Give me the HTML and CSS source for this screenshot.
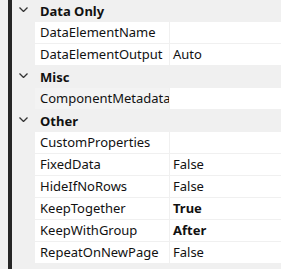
FILE: index.html
```html
<!DOCTYPE html>
<html lang="en">
<head>
    <meta charset="UTF-8">
    <title>Properties</title>
    <link rel="stylesheet" href="styles.css">
</head>
<body>

<div class="grid">
    <div class="category">
        <span class="chevron"><svg width="9" height="5" viewBox="0 0 9 5"><path d="M0.5 0.5 L4.5 4.5 L8.5 0.5" fill="none" stroke="#333" stroke-width="1.3"/></svg></span>
        <span class="cat-name">Data Only</span>
    </div>
    <div class="prop"><span class="name">DataElementName</span><span class="value"></span></div>
    <div class="prop"><span class="name">DataElementOutput</span><span class="value">Auto</span></div>

    <div class="category">
        <span class="chevron"><svg width="9" height="5" viewBox="0 0 9 5"><path d="M0.5 0.5 L4.5 4.5 L8.5 0.5" fill="none" stroke="#333" stroke-width="1.3"/></svg></span>
        <span class="cat-name">Misc</span>
    </div>
    <div class="prop readonly"><span class="name">ComponentMetadata</span><span class="value"></span></div>

    <div class="category">
        <span class="chevron"><svg width="9" height="5" viewBox="0 0 9 5"><path d="M0.5 0.5 L4.5 4.5 L8.5 0.5" fill="none" stroke="#333" stroke-width="1.3"/></svg></span>
        <span class="cat-name">Other</span>
    </div>
    <div class="prop"><span class="name">CustomProperties</span><span class="value"></span></div>
    <div class="prop"><span class="name">FixedData</span><span class="value">False</span></div>
    <div class="prop"><span class="name">HideIfNoRows</span><span class="value">False</span></div>
    <div class="prop"><span class="name">KeepTogether</span><span class="value bold">True</span></div>
    <div class="prop"><span class="name">KeepWithGroup</span><span class="value bold">After</span></div>
    <div class="prop"><span class="name">RepeatOnNewPage</span><span class="value">False</span></div>
</div>

</body>
</html>
```

FILE: styles.css
```css
* {
    margin: 0;
    padding: 0;
    box-sizing: border-box;
}
body {
    font-family: 'Noto Sans', 'Open Sans', sans-serif;
    font-size: 13px;
    color: #111;
    background: #f0f0f0;
    height: 269px;
    overflow: hidden;
}
/* dark bar on the left edge */
.grid {
    margin-left: 8px;
    border-left: 4px solid #262626;
    min-height: 269px;
    display: flex;
    flex-direction: column;
    gap: 1px;
}
.category {
    height: 21px;
    display: flex;
    align-items: center;
}
.chevron {
    width: 23px;
    display: flex;
    justify-content: center;
    padding-bottom: 3px;
}
.cat-name {
    font-weight: bold;
    padding-left: 5px;
}
.prop {
    height: 21px;
    display: grid;
    grid-template-columns: 134px 1fr;
    gap: 1px;
    margin-left: 23px;
}
.prop span {
    background: #fff;
    line-height: 21px;
    white-space: nowrap;
    overflow: hidden;
}
.name {
    padding-left: 5px;
}
.value {
    padding-left: 3px;
}
.readonly .name {
    background: #f3f3f3;
}
.bold {
    font-weight: bold;
}
```
